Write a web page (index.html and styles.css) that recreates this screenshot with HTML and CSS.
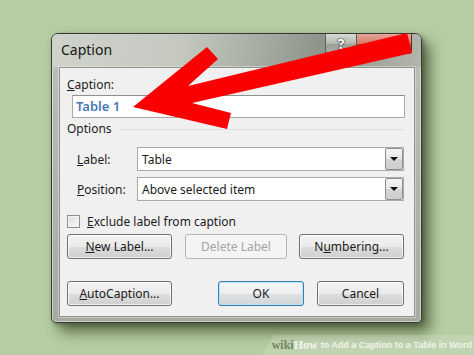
FILE: index.html
```html
<!DOCTYPE html>
<html lang="en">
<head>
<meta charset="utf-8">
<title>Caption</title>
<link rel="stylesheet" href="styles.css">
</head>
<body>
<div class="stage">
  <div class="dialog">
    <div class="titlebar">
      <span class="title">Caption</span>
      <div class="caption-buttons">
        <div class="cb help">?</div>
        <div class="cb close">&#x2715;</div>
      </div>
    </div>
    <div class="client">
      <div class="field-label"><u>C</u>aption:</div>
      <div class="textbox">Table 1</div>
      <div class="group-head"><span>Options</span><span class="rule"></span></div>
      <div class="row first">
        <span class="row-label"><u>L</u>abel:</span>
        <div class="combo"><span class="combo-text">Table</span><span class="drop"><span class="tri"></span></span></div>
      </div>
      <div class="row">
        <span class="row-label"><u>P</u>osition:</span>
        <div class="combo"><span class="combo-text">Above selected item</span><span class="drop"><span class="tri"></span></span></div>
      </div>
      <div class="check-row"><span class="check"></span><span><u>E</u>xclude label from caption</span></div>
      <div class="btn-row">
        <div class="btn w105"><u>N</u>ew Label...</div>
        <div class="btn w102 disabled gap13">Delete Label</div>
        <div class="btn w105 gap12">N<u>u</u>mbering...</div>
      </div>
      <div class="btn-row second">
        <div class="btn w105"><u>A</u>utoCaption...</div>
        <div class="btn w86 default gap46">OK</div>
        <div class="btn w87 gap13">Cancel</div>
      </div>
    </div>
  </div>
  <div class="wm"><span class="wm-wiki">wiki</span><span class="wm-how">How</span><span class="wm-text">to Add a Caption to a Table in Word</span></div>
  <svg class="arrow" width="474" height="355" viewBox="0 0 474 355">
    <polygon points="133,107 207,47 218,59 188,86 407,33 412,53 192,103 231,113 227,129" fill="#fb0000"/>
  </svg>
</div>
</body>
</html>
```
FILE: styles.css
```css
* { box-sizing: border-box; }
html, body { margin: 0; padding: 0; }
body {
  width: 474px;
  height: 355px;
  overflow: hidden;
  background: #b6cca3;
  font-family: "Noto Sans", "Open Sans", sans-serif;
  font-size: 12px;
  color: #1b1b1b;
}
.stage {
  position: relative;
  width: 474px;
  height: 355px;
  padding: 33px 0 0 51px;
}
.dialog {
  width: 371px;
  border: 1px solid #353a33;
  border-radius: 7px 7px 5px 5px;
  background: linear-gradient(#bcc0b7, #a6aaa1);
  padding: 0 6px 5px 7px;
  box-shadow: inset 0 0 0 1px rgba(255,255,255,0.45), 8px 9px 14px rgba(40,60,25,0.65), 2px 2px 4px rgba(0,0,0,0.3);
  display: flex;
  flex-direction: column;
}
.titlebar {
  height: 33px;
  margin: 0 -6px 0 -7px;
  padding: 0 9px 0 8px;
  border-radius: 6px 6px 0 0;
  display: flex;
  align-items: flex-start;
  background: linear-gradient(100deg, #d0d3cb 0%, #c4c8bf 35%, #a9aea4 55%, #8e9489 72%, #9ca196 82%, #b2b6ad 100%);
}
.title {
  margin-top: 6px;
  padding-left: 1px;
  font-size: 14px;
  line-height: 20px;
  color: #161616;
}
.caption-buttons {
  margin-left: auto;
  display: flex;
  height: 20px;
}
.cb {
  height: 20px;
  display: flex;
  align-items: center;
  justify-content: center;
  font-weight: bold;
  color: #fff;
}
.help {
  width: 32px;
  border: 1px solid #5c6259;
  border-top: none;
  border-radius: 0 0 0 4px;
  background: linear-gradient(#d6dad2, #b5bab0 50%, #9aa095 51%, #a8ada3);
  font-size: 14px;
  text-shadow: 0 0 2px #222, 0 0 1px #222;
}
.close {
  width: 55px;
  border: 1px solid #5a2a24;
  border-top: none;
  border-left: none;
  border-radius: 0 0 4px 0;
  background: linear-gradient(#e6a598, #d57a6b 50%, #c44a39 51%, #d8705e);
  font-size: 12px;
  text-shadow: 0 0 2px #5a1a10;
}
.client {
  background: #f0f0f0;
  border: 1px solid #8e938b;
  padding: 0 9px 10px 7px;
  box-shadow: 0 0 0 1px rgba(255,255,255,0.35);
}
.field-label {
  margin-top: 9px;
  line-height: 16px;
}
.textbox {
  margin: 2px 0 0 5px;
  height: 23px;
  border: 1px solid #a7aba5;
  border-top-color: #8f938d;
  background: #fff;
  padding-left: 3px;
  font-size: 13px;
  font-weight: 600;
  color: #4a78b2;
  line-height: 21px;
}
.group-head {
  margin-top: 3px;
  display: flex;
  align-items: center;
  gap: 6px;
  line-height: 16px;
}
.rule {
  flex: 1;
  height: 1px;
  margin-top: 1px;
  background: #dde0e3;
}
.row {
  display: flex;
  align-items: center;
  height: 24px;
  margin-top: 6px;
  padding-left: 10px;
}
.row.first { margin-top: 10px; }
.row-label { width: 60px; flex: none; }
.combo {
  width: 267px;
  height: 24px;
  border: 1px solid #a7aba5;
  background: #fff;
  display: flex;
  align-items: center;
  padding-left: 4px;
}
.combo-text { flex: 1; }
.drop {
  width: 18px;
  height: 22px;
  border: 1px solid #8a9096;
  border-radius: 2px;
  background: linear-gradient(#f4f4f4, #e6e6e6 50%, #d6d6d6 51%, #cdcdcd);
  display: flex;
  align-items: center;
  justify-content: center;
}
.tri {
  width: 0;
  height: 0;
  border-left: 4px solid transparent;
  border-right: 4px solid transparent;
  border-top: 4px solid #111;
}
.check-row {
  margin-top: 12px;
  height: 16px;
  display: flex;
  align-items: center;
  gap: 7px;
}
.check {
  width: 13px;
  height: 13px;
  border: 1px solid #8f8f8f;
  background: linear-gradient(135deg, #dcdcdc, #fbfbfb);
  box-shadow: inset 0 0 0 1px #f6f6f6;
}
.btn-row {
  display: flex;
  margin-top: 5px;
}
.btn-row.second { margin-top: 22px; }
.btn {
  height: 25px;
  border: 1px solid #707070;
  border-radius: 3px;
  background: linear-gradient(#f2f2f2, #ebebeb 50%, #dddddd 51%, #cfcfcf);
  box-shadow: inset 0 0 0 1px rgba(255,255,255,0.75);
  text-align: center;
  line-height: 23px;
  color: #1b1b1b;
}
.btn.disabled {
  border-color: #b3b7ba;
  background: #f4f4f4;
  box-shadow: none;
  color: #a4a4a4;
}
.btn.default {
  border-color: #3c7fb1;
  box-shadow: inset 0 0 0 1px #b6e2f5;
  background: linear-gradient(#f4f6f7, #eceef0 50%, #dfe2e4 51%, #d2d6d9);
}
.w105 { width: 105px; }
.w102 { width: 102px; }
.w86 { width: 86px; }
.w87 { width: 87px; }
.gap12 { margin-left: 12px; }
.gap13 { margin-left: 13px; }
.gap46 { margin-left: 46px; }
.wm {
  margin: 12px 0 0 -51px;
  width: 474px;
  height: 20px;
  display: flex;
  justify-content: flex-end;
  align-items: center;
  padding-right: 2px;
  background: rgba(255,255,255,0.16);
  clip-path: polygon(263px 100%, 273px 0, 100% 0, 100% 100%);
  white-space: nowrap;
}
.wm-wiki {
  font-family: "Liberation Serif", serif;
  font-weight: bold;
  font-size: 12px;
  color: #74845f;
}
.wm-how {
  font-family: "Liberation Serif", serif;
  font-weight: bold;
  font-size: 12px;
  color: #f2f6ee;
  margin-right: 3px;
}
.wm-text {
  font-family: "Liberation Sans", sans-serif;
  font-weight: bold;
  font-size: 9px;
  color: #eef3ea;
}
.arrow {
  position: absolute;
  left: 0;
  top: 0;
  pointer-events: none;
}
```
